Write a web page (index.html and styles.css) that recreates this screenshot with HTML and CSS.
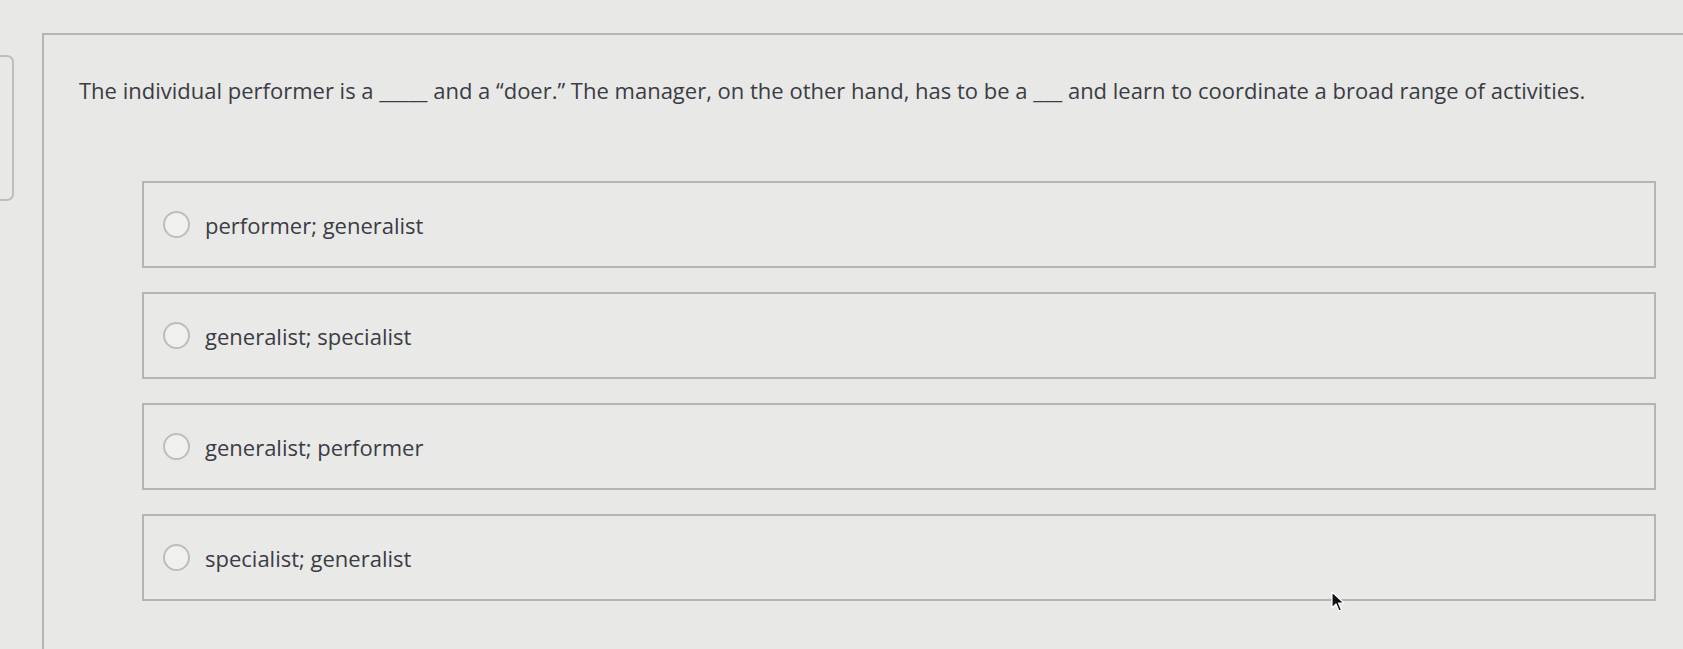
FILE: index.html
```html
<!DOCTYPE html>
<html lang="en">
<head>
<meta charset="utf-8">
<title>Question</title>
<link rel="stylesheet" href="styles.css">
</head>
<body>
<div class="tab"></div>
<main class="panel">
  <p class="question">The individual performer is a _____ and a “doer.” The manager, on the other hand, has to be a ___ and learn to coordinate a broad range of activities.</p>
  <div class="options">
    <label class="option"><span class="radio"></span><span class="label">performer; generalist</span></label>
    <label class="option"><span class="radio"></span><span class="label">generalist; specialist</span></label>
    <label class="option"><span class="radio"></span><span class="label">generalist; performer</span></label>
    <label class="option"><span class="radio"></span><span class="label">specialist; generalist</span></label>
  </div>
</main>
<svg class="cursor" width="14" height="22" viewBox="0 0 14 22"><path d="M1 1 L1 17 L5 13 L8 20 L10.5 19 L7.5 12 L13 12 Z" fill="#111" stroke="#fff" stroke-width="1.2" stroke-linejoin="round"/></svg>
</body>
</html>
```
FILE: styles.css
```css
html, body {
  margin: 0;
  height: 649px;
  overflow: hidden;
}
body {
  background: #e8e8e7;
  font-family: "Open Sans", "DejaVu Sans", sans-serif;
  color: #3b3c44;
  display: flex;
  align-items: flex-start;
  position: relative;
}
.tab {
  flex: none;
  width: 12px;
  height: 142px;
  margin-top: 55px;
  border: 2px solid #bdbdbc;
  border-left: 0;
  border-radius: 0 7px 7px 0;
}
.panel {
  flex: 1;
  margin-top: 33px;
  margin-left: 28px;
  height: 700px;
  border-top: 2px solid #b5b5b4;
  border-left: 2px solid #b5b5b4;
  padding-top: 40px;
}
.question {
  margin: 0 0 0 35px;
  font-size: 22px;
  line-height: 30px;
  white-space: nowrap;
}
.options {
  margin: 76px 27px 0 98px;
  display: flex;
  flex-direction: column;
  gap: 24px;
}
.option {
  height: 83px;
  border: 2px solid #b5b5b4;
  display: flex;
  align-items: center;
  padding-left: 19px;
  gap: 15px;
  background: #e9e9e8;
}
.radio {
  flex: none;
  width: 23px;
  height: 23px;
  border: 2px solid #bdbdbc;
  border-radius: 50%;
  background: #f0f0ef;
}
.label {
  font-size: 22px;
  line-height: 30px;
}
.cursor {
  position: absolute;
  left: 1331px;
  top: 591px;
}
```
